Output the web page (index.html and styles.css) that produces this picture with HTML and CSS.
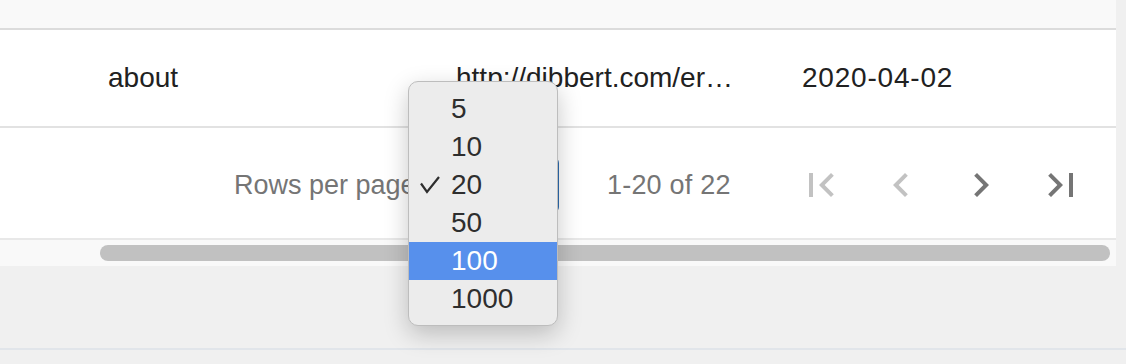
FILE: index.html
```html
<!DOCTYPE html>
<html>
<head>
<meta charset="utf-8">
<link rel="stylesheet" href="styles.css">
</head>
<body>
<div class="page">
  <div class="table">
    <div class="head"></div>
    <div class="row">
      <div class="cell c1">about</div>
      <div class="cell c2">http://dibbert.com/er…</div>
      <div class="cell c3">2020-04-02</div>
    </div>
    <div class="pager">
      <span class="label">Rows per page:</span>
      <div class="select">20</div>
      <span class="shown">1-20 of 22</span>
      <div class="actions">
        <button class="btn off"><svg viewBox="0 0 24 24"><path d="M18.41 16.59L13.82 12l4.59-4.59L17 6l-6 6 6 6zM6 6h2v12H6z"/></svg></button>
        <button class="btn off"><svg viewBox="0 0 24 24"><path d="M15.41 7.41L14 6l-6 6 6 6 1.41-1.41L10.83 12z"/></svg></button>
        <button class="btn"><svg viewBox="0 0 24 24"><path d="M10 6L8.59 7.41 13.17 12l-4.58 4.59L10 18l6-6z"/></svg></button>
        <button class="btn"><svg viewBox="0 0 24 24"><path d="M5.59 7.41L10.18 12l-4.59 4.59L7 18l6-6-6-6zM16 6h2v12h-2z"/></svg></button>
      </div>
    </div>
    <div class="scroll"><div class="thumb"></div></div>
  </div>
  <div class="below"></div>
  <div class="rule"></div>
</div>
<div class="menu">
  <div class="opt">5</div>
  <div class="opt">10</div>
  <div class="opt"><svg class="check" viewBox="0 0 20 18"><polyline points="1,7.5 7,16 19,1"/></svg>20</div>
  <div class="opt">50</div>
  <div class="opt sel">100</div>
  <div class="opt">1000</div>
</div>
</body>
</html>
```
FILE: styles.css
```css
html, body {
  margin: 0;
  padding: 0;
  background: #f0f0f0;
  font-family: "Liberation Sans", Arial, sans-serif;
}
.page {
  width: 1126px;
  height: 364px;
  overflow: hidden;
}
.table {
  width: 1116px;
  background: #fff;
}
.head {
  height: 28px;
  background: #f9f9f9;
  border-bottom: 2px solid #dcdcdc;
}
.row {
  height: 96px;
  border-bottom: 2px solid #e2e2e2;
  display: flex;
  align-items: center;
  font-size: 28px;
  color: #212121;
}
.cell { white-space: nowrap; }
.c1 { margin-left: 108px; width: 348px; }
.c2 { width: 346px; }
.c3 { letter-spacing: 0.8px; }
.pager {
  height: 112px;
  box-sizing: border-box;
  padding-top: 4px;
  border-bottom: 2px solid #e8e8e8;
  display: flex;
  align-items: center;
  justify-content: flex-end;
  padding-right: 15px;
  font-size: 27px;
  color: #757575;
}
.label { white-space: nowrap; }
.select {
  margin-left: 10px;
  width: 126px;
  height: 56px;
  border: 3px solid #2d6cb0;
  border-radius: 6px;
  box-sizing: border-box;
  margin-right: 48px;
}
.shown {
  width: 124px;
  white-space: nowrap;
  letter-spacing: 0.2px;
  margin-right: 50px;
}
.actions { display: flex; }
.btn {
  width: 80px;
  height: 80px;
  padding: 0;
  border: 0;
  background: none;
  display: flex;
  align-items: center;
  justify-content: center;
}
.btn svg {
  width: 48px;
  height: 48px;
  fill: #757575;
}
.btn.off svg { fill: #c2c2c2; }
.scroll {
  height: 26px;
  background: #f9f9f9;
  display: flex;
  align-items: center;
}
.thumb {
  margin-left: 100px;
  width: 1010px;
  height: 16px;
  border-radius: 8px;
  background: #c1c1c1;
}
.below {
  height: 82px;
}
.rule {
  height: 2px;
  background: #e1e5ea;
}
.menu {
  position: absolute;
  left: 408px;
  top: 81px;
  width: 150px;
  height: 245px;
  box-sizing: border-box;
  padding-top: 8px;
  background: #ececec;
  border: 1px solid #bdbdbd;
  border-radius: 10px;
  box-shadow: 0 8px 24px rgba(0,0,0,0.22);
  font-family: "Liberation Sans", Arial, sans-serif;
  font-size: 28px;
  color: #2e2e2e;
  overflow: hidden;
}
.opt {
  height: 38px;
  line-height: 38px;
  padding-left: 42px;
  position: relative;
}
.opt.sel {
  background: #5790ec;
  color: #fff;
}
.check {
  position: absolute;
  left: 11px;
  top: 10px;
  width: 20px;
  height: 18px;
  fill: none;
  stroke: #2e2e2e;
  stroke-width: 2.2;
}
```
